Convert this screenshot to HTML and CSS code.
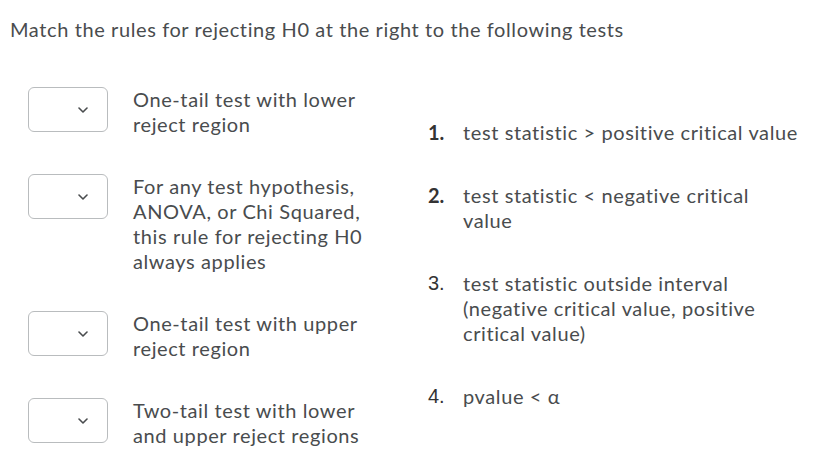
FILE: index.html
```html
<!DOCTYPE html>
<html>
<head>
<meta charset="utf-8">
<link rel="stylesheet" href="styles.css">
</head>
<body>
<div class="page">
  <p class="title">Match the rules for rejecting H0 at the right to the following tests</p>
  <div class="match">
    <div class="left">
      <div class="row">
        <div class="select"><svg class="chev" width="10" height="6" viewBox="0 0 10 6"><path d="M1 1 L5 5 L9 1" fill="none" stroke="#494c4e" stroke-width="1.6" stroke-linecap="round" stroke-linejoin="round"/></svg></div>
        <div class="ltext">One-tail test with lower<br>reject region</div>
      </div>
      <div class="row">
        <div class="select"><svg class="chev" width="10" height="6" viewBox="0 0 10 6"><path d="M1 1 L5 5 L9 1" fill="none" stroke="#494c4e" stroke-width="1.6" stroke-linecap="round" stroke-linejoin="round"/></svg></div>
        <div class="ltext">For any test hypothesis,<br>ANOVA, or Chi Squared,<br>this rule for rejecting H0<br>always applies</div>
      </div>
      <div class="row">
        <div class="select"><svg class="chev" width="10" height="6" viewBox="0 0 10 6"><path d="M1 1 L5 5 L9 1" fill="none" stroke="#494c4e" stroke-width="1.6" stroke-linecap="round" stroke-linejoin="round"/></svg></div>
        <div class="ltext">One-tail test with upper<br>reject region</div>
      </div>
      <div class="row">
        <div class="select"><svg class="chev" width="10" height="6" viewBox="0 0 10 6"><path d="M1 1 L5 5 L9 1" fill="none" stroke="#494c4e" stroke-width="1.6" stroke-linecap="round" stroke-linejoin="round"/></svg></div>
        <div class="ltext">Two-tail test with lower<br>and upper reject regions</div>
      </div>
    </div>
    <div class="right">
      <div class="item"><span class="num n-lato">1.</span><span class="rtext">test statistic &gt; positive critical value</span></div>
      <div class="item"><span class="num n-lato">2.</span><span class="rtext">test statistic &lt; negative critical<br>value</span></div>
      <div class="item"><span class="num n-arial">3.</span><span class="rtext">test statistic outside interval<br>(negative critical value, positive<br>critical value)</span></div>
      <div class="item"><span class="num n-arial">4.</span><span class="rtext">pvalue &lt; &alpha;</span></div>
    </div>
  </div>
</div>
</body>
</html>
```
FILE: styles.css
```css
html, body {
  margin: 0;
  padding: 0;
  background: #ffffff;
}
body {
  font-family: Lato, "Open Sans", sans-serif;
  color: #494c4e;
  font-size: 20px;
  line-height: 25px;
  letter-spacing: 0.6px;
}
.page {
  padding: 17px 0 0 10px;
}
.title {
  margin: 0;
}
.match {
  display: flex;
  margin-top: 45px;
}
.left {
  display: flex;
  flex-direction: column;
  gap: 37px;
  width: 400px;
  padding-left: 18px;
}
.row {
  display: flex;
  align-items: flex-start;
}
.select {
  box-sizing: border-box;
  width: 80px;
  height: 45px;
  border: 1px solid #b9bcbe;
  border-radius: 6px;
  display: flex;
  align-items: center;
  padding-left: 49px;
  flex-shrink: 0;
}
.chev {
  display: block;
  flex: 0 0 10px;
}
.ltext {
  margin-left: 25px;
}
.right {
  display: flex;
  flex-direction: column;
  gap: 38px;
  padding-top: 33px;
}
.item {
  display: flex;
  align-items: flex-start;
}
.num {
  width: 35px;
  flex-shrink: 0;
  color: #333333;
  letter-spacing: 0;
}
.n-lato {
  font-weight: 700;
}
.n-arial {
  font-family: "Liberation Sans", Arial, sans-serif;
}
.rtext {
  display: block;
}
```
